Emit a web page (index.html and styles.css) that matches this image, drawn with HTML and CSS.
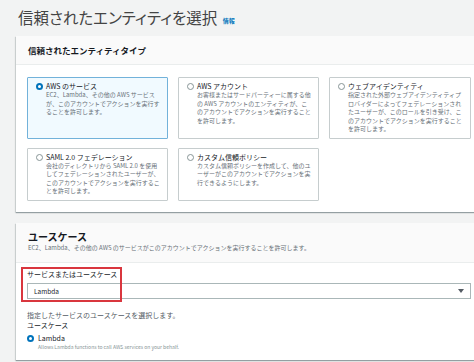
FILE: index.html
```html
<!DOCTYPE html>
<html>
    <head>
        <title>信頼されたエンティティを選択</title>
        <link rel="stylesheet" href="styles.css">
    </head>
    <body>
        <div class="page">
            <h1 class="pageTitle">信頼されたエンティティを選択 <a class="infoLink">情報</a></h1>

            <div class="panel">
                <div class="panelHeader">
                    <h2>信頼されたエンティティタイプ</h2>
                </div>
                <div class="panelBody">
                    <div class="tiles">
                        <div class="tile selected">
                            <span class="radio on"></span>
                            <div class="tileText">
                                <div class="tileTitle">AWS のサービス</div>
                                <div class="tileDesc">EC2、Lambda、その他の AWS サービス<br>が、このアカウントでアクションを実行す<br>ることを許可します。</div>
                            </div>
                        </div>
                        <div class="tile">
                            <span class="radio"></span>
                            <div class="tileText">
                                <div class="tileTitle">AWS アカウント</div>
                                <div class="tileDesc">お客様またはサードパーティーに属する他<br>の AWS アカウントのエンティティが、こ<br>のアカウントでアクションを実行すること<br>を許可します。</div>
                            </div>
                        </div>
                        <div class="tile">
                            <span class="radio"></span>
                            <div class="tileText">
                                <div class="tileTitle">ウェブアイデンティティ</div>
                                <div class="tileDesc">指定された外部ウェブアイデンティティプ<br>ロバイダーによってフェデレーションされ<br>たユーザーが、このロールを引き受け、こ<br>のアカウントでアクションを実行すること<br>を許可します。</div>
                            </div>
                        </div>
                        <div class="tile">
                            <span class="radio"></span>
                            <div class="tileText">
                                <div class="tileTitle">SAML 2.0 フェデレーション</div>
                                <div class="tileDesc">会社のディレクトリから SAML 2.0 を使用<br>してフェデレーションされたユーザーが、<br>このアカウントでアクションを実行するこ<br>とを許可します。</div>
                            </div>
                        </div>
                        <div class="tile">
                            <span class="radio"></span>
                            <div class="tileText">
                                <div class="tileTitle">カスタム信頼ポリシー</div>
                                <div class="tileDesc">カスタム信頼ポリシーを作成して、他のユ<br>ーザーがこのアカウントでアクションを実<br>行できるようにします。</div>
                            </div>
                        </div>
                    </div>
                </div>
            </div>

            <div class="panel">
                <div class="panelHeader tall">
                    <h2>ユースケース</h2>
                    <p class="headerDesc">EC2、Lambda、その他の AWS のサービスがこのアカウントでアクションを実行することを許可します。</p>
                </div>
                <div class="panelBody useCaseBody">
                    <div class="highlightBox"></div>
                    <div class="field">
                        <label class="fieldLabel">サービスまたはユースケース</label>
                        <div class="selectBox">
                            <span>Lambda</span>
                            <svg class="caret" width="6" height="4" viewBox="0 0 6 4"><path d="M0 0h6L3 4z" fill="#545b64"/></svg>
                        </div>
                    </div>
                    <p class="hint">指定したサービスのユースケースを選択します。</p>
                    <p class="groupLabel">ユースケース</p>
                    <div class="option">
                        <span class="radio on"></span>
                        <div>
                            <div class="optionTitle">Lambda</div>
                            <div class="optionDesc">Allows Lambda functions to call AWS services on your behalf.</div>
                        </div>
                    </div>
                </div>
            </div>
        </div>
    </body>
</html>
```

FILE: styles.css
```css
html,body{
    margin: 0;
    padding: 0;
    background-color: #f2f3f3;
    overflow: hidden;
}
body{
    font-family: "Noto Sans CJK JP", "Noto Sans", sans-serif;
    color: #16191f;
}
.page{
    width: 500px;
    padding-left: 16px;
}
.pageTitle{
    margin: 0;
    height: 36px;
    padding-left: 2px;
    font-size: 15.5px;
    font-weight: 400;
    line-height: 34px;
    color: #444;
    font-feature-settings: "palt";
    white-space: nowrap;
}
.pageTitle .infoLink{
    margin-left: 2px;
    font-size: 6px;
    font-weight: 700;
    color: #0073bb;
    vertical-align: 1px;
}
.panel{
    background-color: white;
    box-shadow: 0 1px 1px 0 rgba(0,28,36,.3), -1px 1px 1px 0 rgba(0,28,36,.12);
    margin-bottom: 11px;
}
.panelHeader{
    height: 28px;
    padding: 0 12px;
    background-color: #fafafa;
    border-bottom: 1px solid #eaeded;
    display: flex;
    flex-direction: column;
    justify-content: center;
}
.panelHeader.tall{
    height: 39px;
    justify-content: flex-start;
}
.panelHeader h2{
    margin: 0;
    font-size: 8.5px;
    font-weight: 700;
    line-height: 12px;
    color: #16191f;
}
.panelHeader.tall h2{
    margin-top: 7px;
    font-size: 10px;
    line-height: 13px;
}
.headerDesc{
    margin: 0;
    font-size: 6px;
    line-height: 9px;
    color: #687078;
}
.panelBody{
    padding: 12px 11px 11px 11px;
}
.tiles{
    display: grid;
    grid-template-columns: 141px 141px 142px;
    column-gap: 10px;
    row-gap: 9px;
}
.tile{
    display: flex;
    gap: 3px;
    padding: 4px 6px 4px 8px;
    border: 1px solid #c6cdce;
    border-radius: 1px;
}
.tile.selected{
    background-color: #f1faff;
    border-color: #72b2da;
}
.radio{
    flex: none;
    box-sizing: border-box;
    width: 7px;
    height: 7px;
    margin-top: 1px;
    border-radius: 50%;
    border: 1px solid #879596;
    background-color: white;
}
.radio.on{
    border: 2px solid #0073bb;
}
.tileTitle{
    font-size: 7px;
    line-height: 9px;
    color: #16191f;
    white-space: nowrap;
}
.tileDesc{
    font-size: 6px;
    line-height: 8.5px;
    color: #687078;
    white-space: nowrap;
}
.useCaseBody{
    position: relative;
    padding-top: 6px;
    padding-bottom: 10px;
}
.highlightBox{
    position: absolute;
    left: 5px;
    top: 4px;
    width: 97px;
    height: 31px;
    border: 2px solid #d9363e;
}
.fieldLabel{
    display: block;
    font-size: 7px;
    line-height: 10px;
    color: #16191f;
}
.selectBox{
    box-sizing: border-box;
    width: 444px;
    height: 16px;
    margin-top: 4px;
    padding: 0 6px;
    border: 1px solid #aab7b8;
    display: flex;
    align-items: center;
    justify-content: space-between;
    font-size: 6.5px;
    color: #16191f;
}
.hint{
    margin: 11px 0 0 0;
    font-size: 7px;
    line-height: 10px;
    color: #545b64;
}
.groupLabel{
    margin: 0;
    font-size: 7px;
    line-height: 10px;
    color: #16191f;
}
.option{
    display: flex;
    gap: 4px;
    margin-top: 3px;
}
.option .radio{
    margin-top: 2px;
}
.optionTitle{
    font-size: 7px;
    line-height: 10px;
    color: #16191f;
}
.optionDesc{
    font-size: 5px;
    line-height: 7px;
    color: #879596;
}
```
